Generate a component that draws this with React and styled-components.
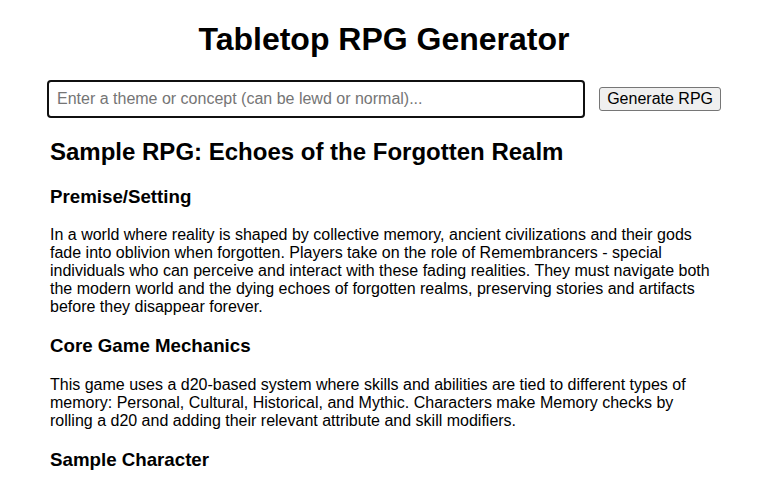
import React, { useState } from 'react';
import styled, { createGlobalStyle } from 'styled-components';

const GlobalStyle = createGlobalStyle`
    body {
        margin: 0;
        background: #fff;
        color: #000;
        font-family: "Liberation Sans", Arial, sans-serif;
    }
`

const Container = styled.main`
    padding: 0 50px;
`

const Title = styled.h1`
    font-size: 32px;
    margin: 21.44px 0;
    text-align: center;
`

const Form = styled.form`
    display: flex;
    align-items: center;
    gap: 14px;
    margin: 0 -3px;
`

const Input = styled.input`
    flex: 1;
    box-sizing: border-box;
    height: 38px;
    padding: 0 8px;
    border: 2px solid #101010;
    border-radius: 4px;
    font-family: inherit;
    font-size: 16px;
    color: #000;
    outline: none;

    &::placeholder {
        color: #757575;
    }
`

const GenerateBtn = styled.button`
    font-family: inherit;
    font-size: 16px;
    line-height: normal;
    padding: 2px 7px;
    background: #efefef;
    color: #000;
    border: 1px solid #767676;
    border-radius: 3px;
`

const RpgTitle = styled.h2`
    font-size: 24px;
    margin: 19.92px 0;
`

const SectionTitle = styled.h3`
    font-size: 18.72px;
    margin: 18.72px 0;
`

const Text = styled.p`
    font-size: 16px;
    margin: 16px 0;
`

const App = () => {
    const [ theme, setTheme ] = useState('');

    const handleOnChange = (event) => {
        setTheme(event.target.value)
    }

    const generate = (e) => {
        e.preventDefault();
    }

    return (
        <>
        <GlobalStyle />
        <Container>
            <Title>Tabletop RPG Generator</Title>
            <Form onSubmit={generate}>
                <Input
                    type="text"
                    value={theme}
                    onChange={handleOnChange}
                    placeholder="Enter a theme or concept (can be lewd or normal)..."
                />
                <GenerateBtn type="submit">Generate RPG</GenerateBtn>
            </Form>
            <RpgTitle>Sample RPG: Echoes of the Forgotten Realm</RpgTitle>
            <SectionTitle>Premise/Setting</SectionTitle>
            <Text>
                In a world where reality is shaped by collective memory, ancient civilizations and their gods
                fade into oblivion when forgotten. Players take on the role of Remembrancers - special
                individuals who can perceive and interact with these fading realities. They must navigate both
                the modern world and the dying echoes of forgotten realms, preserving stories and artifacts
                before they disappear forever.
            </Text>
            <SectionTitle>Core Game Mechanics</SectionTitle>
            <Text>
                This game uses a d20-based system where skills and abilities are tied to different types of
                memory: Personal, Cultural, Historical, and Mythic. Characters make Memory checks by
                rolling a d20 and adding their relevant attribute and skill modifiers.
            </Text>
            <SectionTitle>Sample Character</SectionTitle>
            <Text>
                Name: Elara Voss, a former archivist who discovered her gift after the library she tended
                burned down.
            </Text>
        </Container>
        </>
    );
};

export default App;
